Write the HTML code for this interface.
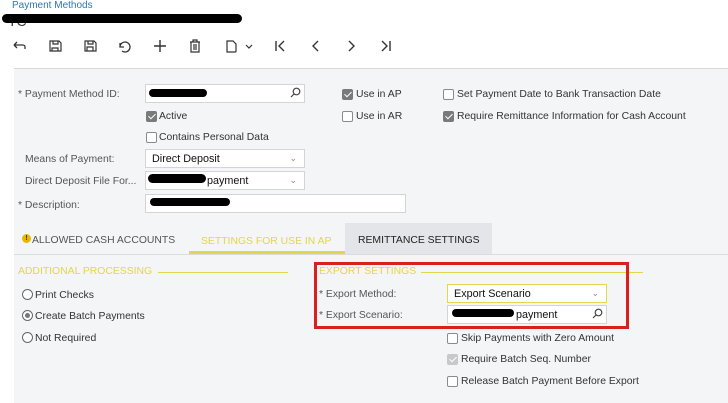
<!DOCTYPE html>
<html><head><meta charset="utf-8"><style>
*{box-sizing:border-box;margin:0;padding:0}
body{width:728px;height:403px;background:#fff;font-family:"Liberation Sans",Arial,sans-serif;font-size:10.4px;color:#333;position:relative;overflow:hidden}
.a{position:absolute;white-space:nowrap}
.t{margin-top:2px}
.form{position:absolute;left:14px;top:68px;width:714px;height:335px;background:#f4f5f7;border-top:1px solid #d8d8d8}
.inp{position:absolute;background:#fff;border:1px solid #d2d4d7;height:19px;font-size:10.8px;color:#111;padding:3px 6px}
.cb{position:absolute;width:11px;height:11px;border:1px solid #8a8a8a;border-radius:2px;background:#fff;margin-top:2px}
.cb.on{background:#7a7a7a;border-color:#7a7a7a}
.cb.on:after{content:"";position:absolute;left:3px;top:0px;width:3px;height:6px;border:solid #fff;border-width:0 1.5px 1.5px 0;transform:rotate(45deg)}
.cb.dis{background:#c8c8c8;border-color:#c8c8c8}
.rd{position:absolute;width:11px;height:11px;border:1px solid #666;border-radius:50%;background:#fff;margin-top:1px}
.rd.on:after{content:"";position:absolute;left:2px;top:2px;width:5px;height:5px;border-radius:50%;background:#777}
.lbl{color:#555}
.scr{position:absolute;background:#000;border-radius:6px}
.chev{position:absolute;right:7px;top:3px;color:#888;font-size:9px}
.ico{position:absolute;top:38px;width:16px;height:16px}
.y{color:#e2d64a}
</style></head><body>
<div class="a" style="left:12px;top:0px;color:#2b78b5;font-size:10px">Payment Methods</div>
<div class="a" style="left:8px;top:13px;font-size:14px;color:#333">TC</div>
<div class="scr" style="left:2px;top:14px;width:240px;height:9px"></div>

<svg class="ico" style="left:11px" viewBox="0 0 16 16" fill="none" stroke="#333" stroke-width="1.3"><path d="M3 7h9a2 2 0 0 1 2 2v2M3 7l3-3M3 7l3 3"/></svg>
<svg class="ico" style="left:47px" viewBox="0 0 16 16" fill="none" stroke="#333" stroke-width="1.2"><path d="M3 3h9l2 2v8H3z M6 3v3h5V3 M5 13v-3h6v3"/></svg>
<svg class="ico" style="left:82px" viewBox="0 0 16 16" fill="none" stroke="#333" stroke-width="1.2"><path d="M3 3h9l2 2v8H3z M6 3v3h5V3 M5 13v-4h6v4"/></svg>
<svg class="ico" style="left:117px" viewBox="0 0 16 16" fill="none" stroke="#333" stroke-width="1.3"><path d="M3 5v4h4M3 9a5 5 0 1 1 2 4"/></svg>
<svg class="ico" style="left:152px" viewBox="0 0 16 16" fill="none" stroke="#333" stroke-width="1.4"><path d="M8 2v12M2 8h12"/></svg>
<svg class="ico" style="left:187px" viewBox="0 0 16 16" fill="none" stroke="#333" stroke-width="1.2"><path d="M3 4h10M6 4V2h4v2M4 4v10h8V4M7 6v6M9 6v6"/></svg>
<svg class="ico" style="left:223px" viewBox="0 0 16 16" fill="none" stroke="#333" stroke-width="1.2"><path d="M4 3h6l3 3v7a1 1 0 0 1-1 1H4z"/></svg>
<svg class="ico" style="left:244px;width:10px" viewBox="0 0 10 16" fill="none" stroke="#333" stroke-width="1.2"><path d="M2 7l3 3 3-3"/></svg>
<svg class="ico" style="left:272px" viewBox="0 0 16 16" fill="none" stroke="#333" stroke-width="1.4"><path d="M4 3v10M12 3l-5 5 5 5"/></svg>
<svg class="ico" style="left:308px" viewBox="0 0 16 16" fill="none" stroke="#333" stroke-width="1.4"><path d="M10 3l-5 5 5 5"/></svg>
<svg class="ico" style="left:343px" viewBox="0 0 16 16" fill="none" stroke="#333" stroke-width="1.4"><path d="M6 3l5 5-5 5"/></svg>
<svg class="ico" style="left:378px" viewBox="0 0 16 16" fill="none" stroke="#333" stroke-width="1.4"><path d="M4 3l5 5-5 5M12 3v10"/></svg>

<div class="form"></div>

<div class="a lbl t" style="left:18px;top:87px">* Payment Method ID:</div>
<div class="inp" style="left:145px;top:84px;width:160px"></div>
<div class="scr" style="left:149px;top:89px;width:58px;height:8px"></div>
<svg class="a" style="left:290px;top:87px" width="11" height="11" viewBox="0 0 11 11" fill="none" stroke="#444" stroke-width="1.2"><circle cx="6.5" cy="4.5" r="3.3"/><path d="M4 7L1 10"/></svg>
<div class="cb on" style="left:342px;top:87px"></div><div class="a t" style="left:356px;top:87px">Use in AP</div>
<div class="cb" style="left:443px;top:87px"></div><div class="a t" style="left:457px;top:87px">Set Payment Date to Bank Transaction Date</div>
<div class="cb on" style="left:146px;top:109px"></div><div class="a t" style="left:159px;top:109px">Active</div>
<div class="cb" style="left:342px;top:109px"></div><div class="a t" style="left:356px;top:109px">Use in AR</div>
<div class="cb on" style="left:443px;top:109px"></div><div class="a t" style="left:457px;top:109px">Require Remittance Information for Cash Account</div>
<div class="cb" style="left:146px;top:130px"></div><div class="a t" style="left:159px;top:130px">Contains Personal Data</div>

<div class="a lbl t" style="left:25px;top:152px">Means of Payment:</div>
<div class="inp" style="left:145px;top:149px;width:160px">Direct Deposit<span class="chev">⌄</span></div>
<div class="a lbl t" style="left:25px;top:174px">Direct Deposit File For...</div>
<div class="inp" style="left:145px;top:171px;width:160px"><span style="margin-left:55px">payment</span><span class="chev">⌄</span></div>
<div class="scr" style="left:148px;top:174px;width:58px;height:9px"></div>
<div class="a lbl t" style="left:18px;top:198px">* Description:</div>
<div class="inp" style="left:145px;top:194px;width:261px"></div>
<div class="scr" style="left:150px;top:198px;width:80px;height:8px"></div>

<div class="a" style="left:22px;top:234px;width:9px;height:9px;border-radius:50%;background:#e8b800;color:#333;font-size:7px;font-weight:bold;text-align:center;line-height:9px">!</div>
<div class="a t" style="left:32px;top:233px;color:#555">ALLOWED CASH ACCOUNTS</div>
<div class="a y t" style="left:201px;top:234px">SETTINGS FOR USE IN AP</div>
<div class="a" style="left:189px;top:251px;width:156px;height:3px;background:#e2d64a"></div>
<div class="a" style="left:345px;top:223px;width:147px;height:31px;background:#e3e5e8;padding:12px 0 0 13px;color:#222">REMITTANCE SETTINGS</div>
<div class="a" style="left:14px;top:254px;width:714px;height:1px;background:#dcdcdc"></div>

<div class="a y t" style="left:18px;top:264px">ADDITIONAL PROCESSING</div>
<div class="a" style="left:158px;top:272px;width:130px;height:1px;background:#e2d64a"></div>
<div class="rd" style="left:22px;top:288px"></div><div class="a t" style="left:35px;top:288px">Print Checks</div>
<div class="rd on" style="left:22px;top:309px"></div><div class="a t" style="left:35px;top:309px">Create Batch Payments</div>
<div class="rd" style="left:22px;top:331px"></div><div class="a t" style="left:35px;top:331px">Not Required</div>

<div class="a y t" style="left:319px;top:264px">EXPORT SETTINGS</div>
<div class="a" style="left:421px;top:272px;width:222px;height:1px;background:#e2d64a"></div>
<div class="a" style="left:314px;top:262px;width:315px;height:67px;border:3px solid #d9201f"></div>
<div class="a lbl t" style="left:319px;top:287px">* Export Method:</div>
<div class="inp" style="left:447px;top:284px;width:160px;border-color:#e2d64a">Export Scenario<span class="chev">⌄</span></div>
<div class="a lbl t" style="left:319px;top:308px">* Export Scenario:</div>
<div class="inp" style="left:447px;top:305px;width:160px"><span style="margin-left:62px">payment</span></div>
<div class="scr" style="left:452px;top:309px;width:62px;height:8px"></div>
<svg class="a" style="left:592px;top:308px" width="11" height="11" viewBox="0 0 11 11" fill="none" stroke="#444" stroke-width="1.2"><circle cx="6.5" cy="4.5" r="3.3"/><path d="M4 7L1 10"/></svg>
<div class="cb" style="left:447px;top:331px"></div><div class="a t" style="left:461px;top:331px">Skip Payments with Zero Amount</div>
<div class="cb on dis" style="left:447px;top:352px"></div><div class="a t" style="left:461px;top:352px">Require Batch Seq. Number</div>
<div class="cb" style="left:447px;top:374px"></div><div class="a t" style="left:461px;top:374px">Release Batch Payment Before Export</div>
</body></html>
